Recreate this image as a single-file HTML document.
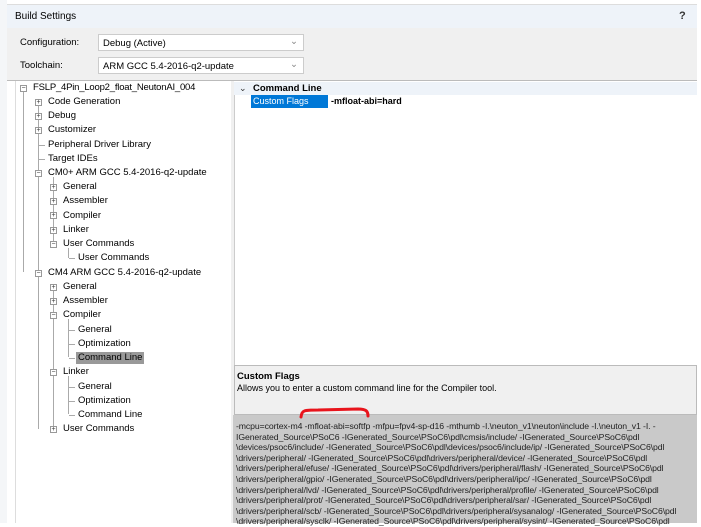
<!DOCTYPE html>
<html><head><meta charset="utf-8"><style>
*{margin:0;padding:0;box-sizing:border-box}
body{width:701px;height:523px;overflow:hidden;background:#fff;font-family:"Liberation Sans",sans-serif;font-size:9.5px;color:#000;position:relative}
.a{position:absolute;white-space:nowrap}
.tree .a{font-size:9.5px;line-height:12px}
.box{position:absolute;width:7px;height:7px;border:1px solid #999;background:#fff;font-size:7px;line-height:5px;text-align:center;color:#333}
.hl{position:absolute;border-top:1px solid #aaa;height:0;width:6px}
.vl{position:absolute;border-left:1px solid #aaa;width:0}
.sel{background:#999;padding:0 2px}
.cmd{position:absolute;left:233px;top:415px;width:464px;height:108px;background:#c9c9c9;font-size:8.7px;line-height:10.6px;padding:6px 0 0 3px;color:#222;letter-spacing:-0.1px}
.cmd div{white-space:nowrap}
</style></head><body>
<div class="a" style="left:0;top:0;width:7px;height:523px;background:#f4f6f8"></div>
<div class="a" style="left:7px;top:4px;width:690px;height:24px;background:#eef3f9;border-top:1px solid #ddd"></div>
<div class="a" style="left:15px;top:11px;font-size:10px">Build Settings</div>
<div class="a" style="left:679px;top:10px;font-size:11px;font-weight:bold;color:#333">?</div>
<div class="a" style="left:7px;top:28px;width:690px;height:53px;background:#f0f0f0;border-bottom:1px solid #bbb"></div>
<div class="a" style="left:20px;top:37px;font-size:9.5px">Configuration:</div>
<div class="a" style="left:20px;top:60px;font-size:9.5px">Toolchain:</div>
<div class="a" style="left:98px;top:34px;width:206px;height:17px;background:#fff;border:1px solid #ccc;padding:3px 4px;font-size:9.5px">Debug (Active)<span style="position:absolute;right:5px;top:1px;color:#888">&#8964;</span></div>
<div class="a" style="left:98px;top:57px;width:206px;height:17px;background:#fff;border:1px solid #ccc;padding:3px 4px;font-size:9.5px">ARM GCC 5.4-2016-q2-update<span style="position:absolute;right:5px;top:1px;color:#888">&#8964;</span></div>
<div class="a" style="left:15px;top:81px;width:216px;height:442px;background:#fff;border-left:1px solid #ddd"></div>
<div class="a" style="left:231px;top:81px;width:3px;height:442px;background:#f0f0f0"></div>
<div class="a" style="left:234px;top:82px;width:463px;height:13px;background:#eef3f9"></div>
<div class="a" style="left:234px;top:95px;width:463px;height:270px;background:#fff;border-left:1px solid #ccc"></div>
<div class="a" style="left:239px;top:83px;font-size:9px;color:#333">&#8964;</div>
<div class="a" style="left:253px;top:83px;font-weight:bold;font-size:9.5px">Command Line</div>
<div class="a" style="left:251px;top:95px;width:77px;height:13px;background:#0078d7;color:#fff;padding:1px 2px;font-size:9px">Custom Flags</div>
<div class="a" style="left:331px;top:96px;font-weight:bold;font-size:9px">-mfloat-abi=hard</div>
<div class="a" style="left:234px;top:365px;width:463px;height:50px;background:#f0f0f0;border:1px solid #bbb"></div>
<div class="a" style="left:237px;top:371px;font-weight:bold;font-size:9.5px">Custom Flags</div>
<div class="a" style="left:237px;top:383px;font-size:9px">Allows you to enter a custom command line for the Compiler tool.</div>
<div class="cmd">
<div>-mcpu=cortex-m4 -mfloat-abi=softfp -mfpu=fpv4-sp-d16 -mthumb -I.\neuton_v1\neuton\include -I.\neuton_v1 -I. -</div>
<div>IGenerated_Source\PSoC6 -IGenerated_Source\PSoC6\pdl\cmsis/include/ -IGenerated_Source\PSoC6\pdl</div>
<div>\devices/psoc6/include/ -IGenerated_Source\PSoC6\pdl\devices/psoc6/include/ip/ -IGenerated_Source\PSoC6\pdl</div>
<div>\drivers/peripheral/ -IGenerated_Source\PSoC6\pdl\drivers/peripheral/device/ -IGenerated_Source\PSoC6\pdl</div>
<div>\drivers/peripheral/efuse/ -IGenerated_Source\PSoC6\pdl\drivers/peripheral/flash/ -IGenerated_Source\PSoC6\pdl</div>
<div>\drivers/peripheral/gpio/ -IGenerated_Source\PSoC6\pdl\drivers/peripheral/ipc/ -IGenerated_Source\PSoC6\pdl</div>
<div>\drivers/peripheral/lvd/ -IGenerated_Source\PSoC6\pdl\drivers/peripheral/profile/ -IGenerated_Source\PSoC6\pdl</div>
<div>\drivers/peripheral/prot/ -IGenerated_Source\PSoC6\pdl\drivers/peripheral/sar/ -IGenerated_Source\PSoC6\pdl</div>
<div>\drivers/peripheral/scb/ -IGenerated_Source\PSoC6\pdl\drivers/peripheral/sysanalog/ -IGenerated_Source\PSoC6\pdl</div>
<div>\drivers/peripheral/sysclk/ -IGenerated_Source\PSoC6\pdl\drivers/peripheral/sysint/ -IGenerated_Source\PSoC6\pdl</div>
</div>
<svg class="a" style="left:298px;top:405px" width="75" height="14"><path d="M3 12 C4 5 6 5 20 5 L60 4 C68 4 70 6 70 11" stroke="#e8141c" stroke-width="3" fill="none" stroke-linecap="round"/></svg>
<div class="tree">
<div class="vl" style="left:23px;top:92px;height:180px"></div>
<div class="vl" style="left:38px;top:106px;height:167px"></div>
<div class="vl" style="left:38px;top:277px;height:152px"></div>
<div class="vl" style="left:53px;top:177px;height:68px"></div>
<div class="vl" style="left:68px;top:248px;height:10px"></div>
<div class="vl" style="left:53px;top:291px;height:138px"></div>
<div class="vl" style="left:68px;top:319px;height:38px"></div>
<div class="vl" style="left:68px;top:376px;height:38px"></div>
<div class="box" style="left:20px;top:85px">&#8722;</div><div class="a" style="left:33px;top:82px;letter-spacing:-0.2px">FSLP_4Pin_Loop2_float_NeutonAI_004</div>
<div class="box" style="left:35px;top:99px">+</div><div class="a" style="left:48px;top:96px">Code Generation</div>
<div class="box" style="left:35px;top:113px">+</div><div class="a" style="left:48px;top:110px">Debug</div>
<div class="box" style="left:35px;top:127px">+</div><div class="a" style="left:48px;top:124px">Customizer</div>
<div class="hl" style="left:39px;top:145px"></div><div class="a" style="left:48px;top:139px">Peripheral Driver Library</div>
<div class="hl" style="left:39px;top:159px"></div><div class="a" style="left:48px;top:153px">Target IDEs</div>
<div class="box" style="left:35px;top:170px">&#8722;</div><div class="a" style="left:48px;top:167px">CM0+ ARM GCC 5.4-2016-q2-update</div>
<div class="box" style="left:50px;top:184px">+</div><div class="a" style="left:63px;top:181px">General</div>
<div class="box" style="left:50px;top:198px">+</div><div class="a" style="left:63px;top:195px">Assembler</div>
<div class="box" style="left:50px;top:212px">+</div><div class="a" style="left:63px;top:210px">Compiler</div>
<div class="box" style="left:50px;top:227px">+</div><div class="a" style="left:63px;top:224px">Linker</div>
<div class="box" style="left:50px;top:241px">&#8722;</div><div class="a" style="left:63px;top:238px">User Commands</div>
<div class="hl" style="left:69px;top:258px"></div><div class="a" style="left:78px;top:252px">User Commands</div>
<div class="box" style="left:35px;top:270px">&#8722;</div><div class="a" style="left:48px;top:267px">CM4 ARM GCC 5.4-2016-q2-update</div>
<div class="box" style="left:50px;top:284px">+</div><div class="a" style="left:63px;top:281px">General</div>
<div class="box" style="left:50px;top:298px">+</div><div class="a" style="left:63px;top:295px">Assembler</div>
<div class="box" style="left:50px;top:312px">&#8722;</div><div class="a" style="left:63px;top:309px">Compiler</div>
<div class="hl" style="left:69px;top:330px"></div><div class="a" style="left:78px;top:324px">General</div>
<div class="hl" style="left:69px;top:344px"></div><div class="a" style="left:78px;top:338px">Optimization</div>
<div class="hl" style="left:69px;top:358px"></div><div class="a sel" style="left:76px;top:352px">Command Line</div>
<div class="box" style="left:50px;top:369px">&#8722;</div><div class="a" style="left:63px;top:366px">Linker</div>
<div class="hl" style="left:69px;top:387px"></div><div class="a" style="left:78px;top:381px">General</div>
<div class="hl" style="left:69px;top:401px"></div><div class="a" style="left:78px;top:395px">Optimization</div>
<div class="hl" style="left:69px;top:415px"></div><div class="a" style="left:78px;top:409px">Command Line</div>
<div class="box" style="left:50px;top:426px">+</div><div class="a" style="left:63px;top:423px">User Commands</div>
</div>
</body></html>
